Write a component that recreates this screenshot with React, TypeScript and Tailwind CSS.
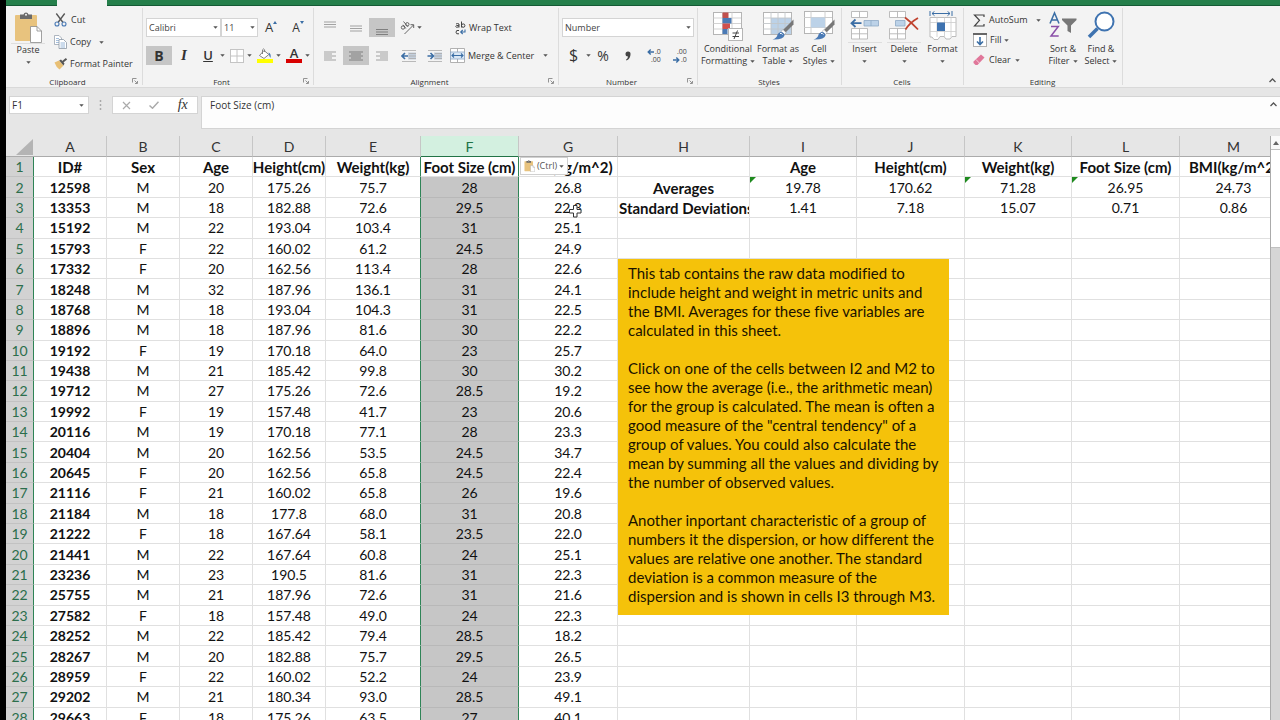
import React from "react";

type IconProps = { className?: string };

const SEGOE = "font-['Open_Sans','Noto_Sans',sans-serif]";

function Caret({ className = "" }: IconProps) {
  return (
    <svg viewBox="0 0 5 3" className={`h-[3px] w-[5px] shrink-0 ${className}`} aria-hidden="true">
      <path d="M0.3 0.2H4.7L2.5 2.8Z" fill="#555" />
    </svg>
  );
}

function Launcher() {
  return (
    <button type="button" aria-label="More options" className="absolute right-[5px] bottom-[3px] h-[6px] w-[6px]">
      <svg viewBox="0 0 6 6" className="h-full w-full">
        <path d="M0.5 4.5V0.5H4.5M2.5 2.5L5 5M5.5 3V5.5H3" fill="none" stroke="#888" strokeWidth="0.9" />
      </svg>
    </button>
  );
}

function Group({
  label,
  className,
  launcher = false,
  children,
}: {
  label: string;
  className: string;
  launcher?: boolean;
  children: React.ReactNode;
}) {
  return (
    <section aria-label={label} className={`relative flex h-full shrink-0 flex-col ${className}`}>
      <div className="min-h-0 flex-1">{children}</div>
      <div className={`h-[11px] text-center text-[8px] leading-[11px] text-[#333] ${launcher ? "pr-[14px]" : "pr-[2px]"}`}>{label}</div>
      {launcher && <Launcher />}
      <span className="absolute top-[2px] right-0 bottom-[2px] w-px bg-[#dcdcdc]" />
    </section>
  );
}

function PasteIcon({ className = "" }: IconProps) {
  return (
    <svg viewBox="0 0 28 31" className={className} aria-hidden="true">
      <rect x="1" y="3" width="22" height="26" rx="1" fill="#e8c37e" />
      <path d="M6 2.5h3.5a2.6 2.6 0 0 1 5 0H18V7H6Z" fill="#6a6a6a" />
      <circle cx="12" cy="2.8" r="1" fill="#f3f3f3" />
      <path d="M16.5 14.5h6.5l4.5 4.5v11.5h-11z" fill="#fff" stroke="#8a8a8a" strokeWidth="0.8" />
      <path d="M23 14.5v4.5h4.5" fill="none" stroke="#8a8a8a" strokeWidth="0.8" />
    </svg>
  );
}

function CutIcon() {
  return (
    <svg viewBox="0 0 13 14" className="h-[14px] w-[13px]" aria-hidden="true">
      <path d="M2.3 0.5L9 9.5M10.7 0.5L4 9.5" stroke="#555" strokeWidth="1.3" fill="none" />
      <circle cx="3" cy="11" r="2" fill="none" stroke="#4a7ab5" strokeWidth="1.1" />
      <circle cx="10" cy="11" r="2" fill="none" stroke="#4a7ab5" strokeWidth="1.1" />
    </svg>
  );
}

function CopyIcon() {
  return (
    <svg viewBox="0 0 13 14" className="h-[14px] w-[13px]" aria-hidden="true">
      <path d="M0.5 0.5H5L7.5 3V9.5H0.5Z" fill="#fff" stroke="#9aa5b1" strokeWidth="0.8" />
      <path d="M2 3.5h3M2 5.5h3M2 7.5h3" stroke="#8fb0d5" strokeWidth="0.8" />
      <path d="M5 4.5H9.5L12.5 7.5V13.5H5Z" fill="#fff" stroke="#8a97a5" strokeWidth="0.8" />
      <path d="M6.5 8h4.5M6.5 10h4.5M6.5 12h4.5" stroke="#7fa4cf" strokeWidth="0.8" />
    </svg>
  );
}

function PainterIcon() {
  return (
    <svg viewBox="0 0 14 12" className="h-[12px] w-[14px]" aria-hidden="true">
      <path d="M0.5 4.5L5 2.5L9.5 7.5L5.5 11.5Q2 9 0.5 4.5Z" fill="#e8bf74" />
      <path d="M5.2 2.5L7 1.5L10.5 5.5L9.5 7.5Z" fill="#555" />
      <path d="M8.5 4L12.5 0.8" stroke="#555" strokeWidth="2" />
    </svg>
  );
}

function BordersIcon() {
  return (
    <svg viewBox="0 0 14 14" className="h-[14px] w-[14px]" aria-hidden="true">
      <rect x="0.5" y="0.5" width="13" height="13" fill="#fff" stroke="#c4c4c4" />
      <path d="M7 1V13M1 7H13" stroke="#c4c4c4" />
    </svg>
  );
}

function FillIcon() {
  return (
    <svg viewBox="0 0 16 15" className="h-[15px] w-[16px]" aria-hidden="true">
      <path d="M7 2.5L11.8 6.5L7 10.5L2.5 7.5Z" fill="#fff" stroke="#777" strokeWidth="0.9" />
      <path d="M5.5 6V1.8Q6.5 0 7.6 1.8V4" fill="none" stroke="#777" strokeWidth="0.9" />
      <path d="M11.5 4.5Q14.5 5.5 13.5 10Q12 8 11.5 4.5Z" fill="#4a7ab5" />
      <rect x="0" y="11" width="16" height="4" fill="#ffff00" />
    </svg>
  );
}

function AlignIcon({ rows, color = "#999" }: { rows: [number, number, number][]; color?: string }) {
  return (
    <svg viewBox="0 0 14 14" className="h-[14px] w-[14px]" aria-hidden="true">
      {rows.map(([x1, x2, y]) => (
        <path key={y} d={`M${x1} ${y}H${x2}`} stroke={color} strokeWidth="0.9" />
      ))}
    </svg>
  );
}

function OrientationIcon() {
  return (
    <svg viewBox="0 0 15 14" className="h-[14px] w-[15px]" aria-hidden="true">
      <g fill="none" stroke="#555" strokeWidth="0.9">
        <circle cx="3" cy="6.5" r="1.7" />
        <path d="M3.2 3.8L5.8 7.5" />
        <path d="M3.5 0.5L8 5.8" />
        <circle cx="7.3" cy="3.3" r="1.7" />
        <path d="M4.5 13L13.5 4M13.7 7V3.7H10.5" />
      </g>
    </svg>
  );
}

function IndentIcon({ flip = false }: { flip?: boolean }) {
  return (
    <svg viewBox="0 0 15 12" className="h-[12px] w-[15px]" aria-hidden="true">
      <rect x="7" y="2.5" width="8" height="7" fill="#c3cfdd" />
      <path d="M1 0.5H15M1 11.5H15M8 3.5H15M8 6H15M8 8.5H15" stroke="#aaa" strokeWidth="0.8" />
      {flip ? (
        <path d="M0.5 6H6M3.5 3L6.5 6L3.5 9" stroke="#3b6ea5" strokeWidth="1.6" fill="none" />
      ) : (
        <path d="M7 6H1.5M4 3L1 6L4 9" stroke="#3b6ea5" strokeWidth="1.6" fill="none" />
      )}
    </svg>
  );
}

function WrapIcon() {
  return (
    <svg viewBox="0 0 11 14" className="h-[14px] w-[11px]" aria-hidden="true">
      <g fill="none" stroke="#444" strokeWidth="1">
        <path d="M1 3Q2.5 2 4 3V6.5M4 4.3Q0.7 4.3 0.7 5.5Q0.9 7 4 5.7" />
        <path d="M6.5 0.5V6.5" />
        <circle cx="8.2" cy="4.6" r="1.7" />
        <path d="M4 9.5Q1 8.7 1 11.2Q1 13.5 4 12.8" />
      </g>
      <path d="M10 8.5V11H6M7.7 9L5.7 11L7.7 13" fill="none" stroke="#3b6ea5" strokeWidth="1.1" />
    </svg>
  );
}

function MergeIcon() {
  return (
    <svg viewBox="0 0 15 15" className="h-[15px] w-[15px]" aria-hidden="true">
      <path d="M0.5 0.5H14.5V14.5H0.5ZM7.5 0.5V4M7.5 11V14.5" fill="#fff" stroke="#a8a8a8" strokeWidth="0.9" />
      <rect x="0.5" y="4" width="14" height="7" fill="#dbe8f5" stroke="#8ea9c5" strokeWidth="0.8" />
      <path d="M2 7.5H13M4 5.5L2 7.5L4 9.5M11 5.5L13 7.5L11 9.5" fill="none" stroke="#3b6ea5" strokeWidth="1.1" />
    </svg>
  );
}

function DecimalIcon({ increase = false }: { increase?: boolean }) {
  return (
    <span className="relative flex w-[14px] flex-col items-end text-[7px] leading-[8px] text-[#444]">
      <span>{increase ? ".0" : ".00"}</span>
      <span>{increase ? ".00" : ".0"}</span>
      <svg
        viewBox="0 0 7 6"
        className={`absolute left-0 h-[6px] w-[7px] ${increase ? "top-[1px]" : "bottom-[1px]"}`}
        aria-hidden="true"
      >
        {increase ? (
          <path d="M7 3H1.5M3.7 0.5L1.2 3L3.7 5.5" fill="none" stroke="#3b6ea5" strokeWidth="1.4" />
        ) : (
          <path d="M0 3H5.5M3.3 0.5L5.8 3L3.3 5.5" fill="none" stroke="#3b6ea5" strokeWidth="1.4" />
        )}
      </svg>
    </span>
  );
}

function ConditionalIcon() {
  return (
    <svg viewBox="0 0 30 30" className="h-[30px] w-[30px]" aria-hidden="true">
      <rect x="0.5" y="1.5" width="28" height="22" fill="#fff" stroke="#b5b5b5" />
      <path d="M9.5 1V23M19 1V23M0 7H28M0 12.5H28M0 18H28" stroke="#c8c8c8" strokeWidth="0.8" />
      <rect x="9.5" y="1.5" width="6" height="5.5" fill="#c0504d" />
      <rect x="9.5" y="7" width="9" height="5.5" fill="#4a7ab5" />
      <rect x="9.5" y="12.5" width="7.5" height="5.5" fill="#d0504d" />
      <rect x="9.5" y="18" width="5" height="5" fill="#4a7ab5" />
      <rect x="15.5" y="17.5" width="14" height="12" fill="#fff" stroke="#b5b5b5" />
      <path d="M19.5 22H26M19.5 25.5H26M24.5 19.5L21 28" stroke="#444" strokeWidth="1" />
    </svg>
  );
}

function Brush() {
  return (
    <g>
      <path d="M30.500 8.5V13.5L22.5 21.5L20 19Z" fill="#777" />
      <path d="M20 18.5L23 21.5L21.5 23.5L18 20.5Z" fill="#fff" stroke="#888" strokeWidth="0.5" />
      <path d="M17.5 21Q21 21 21.5 24.5Q20 29 9.5 28.5Q14 27 14.5 23.5Q15.5 21.5 17.5 21Z" fill="#4a7ab5" />
      <path d="M17 22.5Q18.5 22 19.5 23.5" stroke="#fff" strokeWidth="1" fill="none" />
    </g>
  );
}

function FormatTableIcon() {
  return (
    <svg viewBox="0 0 31 30" className="h-[30px] w-[31px]" aria-hidden="true">
      <rect x="0.5" y="1.5" width="28" height="22" fill="#fff" stroke="#b5b5b5" />
      <rect x="8" y="7" width="20" height="16" fill="#bcd2e8" />
      <path d="M8 1V23M15 1V23M22 1V23M0 7H28M0 12.5H28M0 18H28" stroke="#c2c6ca" strokeWidth="0.9" />
      <Brush />
    </svg>
  );
}

function CellStylesIcon() {
  return (
    <svg viewBox="0 0 31 30" className="h-[30px] w-[31px]" aria-hidden="true">
      <rect x="0.5" y="0.5" width="28" height="22" fill="#fff" stroke="#b5b5b5" />
      <path d="M7 0V22M21 0V22M0 6.5H28M0 16.5H28" stroke="#c8c8c8" strokeWidth="0.9" />
      <rect x="7" y="6.5" width="14" height="10" fill="#bcd2e8" />
      <Brush />
    </svg>
  );
}

function InsertIcon() {
  return (
    <svg viewBox="0 0 30 30" className="h-[30px] w-[30px]" aria-hidden="true">
      <g fill="#fff" stroke="#b5b5b5" strokeWidth="0.9">
        <path d="M1.5 0.5H17.5V6.5H1.5ZM9.5 0.5V6.5" />
        <path d="M1.5 17.5H17.5V28H1.5ZM9.5 17.5V28M1.5 22.8H17.5" />
      </g>
      <path d="M14 9.5H28.5V15H14ZM21 9.5V15" fill="#bcd2e8" stroke="#8ea9c5" strokeWidth="0.8" />
      <path d="M11.5 12.2H2M5.5 8.5L1.5 12.2L5.5 16" fill="none" stroke="#3b6ea5" strokeWidth="1.8" />
    </svg>
  );
}

function DeleteIcon() {
  return (
    <svg viewBox="0 0 30 30" className="h-[30px] w-[30px]" aria-hidden="true">
      <g fill="#fff" stroke="#b5b5b5" strokeWidth="0.9">
        <path d="M0.5 0.5H16.5V6.5H0.5ZM8.5 0.5V6.5" />
        <path d="M0.5 17.5H16.5V28H0.5ZM8.5 17.5V28M0.5 22.8H16.5" />
      </g>
      <path d="M6.5 9.5H16V15H6.5Z" fill="#bcd2e8" stroke="#8ea9c5" strokeWidth="0.8" />
      <path d="M16 6.5Q22 11 29 18.5M29 7Q21 11.5 16.5 18.5" fill="none" stroke="#c0432f" strokeWidth="1.8" />
    </svg>
  );
}

function FormatIcon() {
  return (
    <svg viewBox="0 0 28 30" className="h-[30px] w-[28px]" aria-hidden="true">
      <path d="M1 0V5M23 0V5M3 2.5H21M5.5 0.3L3 2.5L5.5 4.7M18.5 0.3L21 2.5L18.5 4.7" fill="none" stroke="#3b6ea5" strokeWidth="1" />
      <path d="M1 6.5H27V25.5H23L21 28H17L15 25.5H11L9 28.5H5L3 26H1Z" fill="#fff" stroke="#b5b5b5" strokeWidth="0.9" />
      <path d="M8 6.5V26M15.5 6.5V26M22 6.5V26M1 11.5H27M1 20.5H27" stroke="#ccc" strokeWidth="0.8" />
      <rect x="8" y="11.5" width="8" height="8.5" fill="#3f73b0" />
    </svg>
  );
}

function SigmaIcon() {
  return (
    <svg viewBox="0 0 12 13" className="h-[13px] w-[12px]" aria-hidden="true">
      <path d="M11 3V1H1.5L6.5 6.3L1.5 12H11V10" fill="none" stroke="#444" strokeWidth="1.2" />
    </svg>
  );
}

function FillDownIcon() {
  return (
    <svg viewBox="0 0 14 14" className="h-[14px] w-[14px]" aria-hidden="true">
      <rect x="0.5" y="0.5" width="13" height="13" fill="#fff" stroke="#b0b0b0" />
      <rect x="0" y="0" width="14" height="2" fill="#666" />
      <path d="M7 4V11.5M4 8.5L7 11.5L10 8.5" fill="none" stroke="#3b6ea5" strokeWidth="1.6" />
    </svg>
  );
}

function EraserIcon() {
  return (
    <svg viewBox="0 0 12 12" className="h-[12px] w-[12px]" aria-hidden="true">
      <path d="M8 0.5L11.5 3.5L4.5 11H2.5L0.5 9V7.5Z" fill="#e0779a" />
      <path d="M3 5.5L6.3 9" stroke="#f7d5e0" strokeWidth="0.9" />
    </svg>
  );
}

function SortIcon() {
  return (
    <svg viewBox="0 0 28 28" className="h-[28px] w-[28px]" aria-hidden="true">
      <path d="M1 12.5L5.5 2L10 12.5M2.7 9H8.3" fill="none" stroke="#3b6ea5" strokeWidth="1.5" />
      <path d="M2 15.5H9.3L2 25H9.7" fill="none" stroke="#8a4fa8" strokeWidth="1.5" />
      <path d="M13 7.5H27.5V9L22 14.5V22L18.5 20V14.5L13 9Z" fill="#777" />
    </svg>
  );
}

function FindIcon() {
  return (
    <svg viewBox="0 0 28 28" className="h-[28px] w-[28px]" aria-hidden="true">
      <circle cx="17.5" cy="10.5" r="9" fill="#fff" stroke="#3f73b0" strokeWidth="2" />
      <path d="M10.5 17.5L2 26" stroke="#3f73b0" strokeWidth="3.5" />
    </svg>
  );
}

function BigButton({
  icon,
  lines,
  className = "",
  split = false,
}: {
  icon: React.ReactNode;
  lines: string[];
  className?: string;
  split?: boolean;
}) {
  return (
    <button type="button" className={`flex shrink-0 flex-col items-center text-[9px] leading-[12px] ${className}`}>
      <span className={`flex h-[32px] justify-center border-b ${split ? "w-[34px] border-[#dedede]" : "border-transparent"}`}>{icon}</span>
      <span className="whitespace-nowrap">{lines[0]}</span>
      <span className="flex h-[12px] items-center gap-[3px] whitespace-nowrap">
        {lines[1]}
        <Caret />
      </span>
    </button>
  );
}

function ToolButton({
  label,
  className = "w-[26px]",
  pressed = false,
  children,
}: {
  label: string;
  className?: string;
  pressed?: boolean;
  children: React.ReactNode;
}) {
  return (
    <button
      type="button"
      aria-label={label}
      aria-pressed={pressed}
      className={`flex h-[19px] shrink-0 items-center justify-center ${pressed ? "bg-[#c6c6c6]" : ""} ${className}`}
    >
      {children}
    </button>
  );
}

function Combo({ label, value, className }: { label: string; value: string; className: string }) {
  return (
    <label className={`relative flex h-[19px] shrink-0 items-center border border-[#d4d4d4] bg-white ${className}`}>
      <select aria-label={label} className="h-full w-full appearance-none bg-transparent pl-[2px] text-[9px] text-[#444]">
        <option>{value}</option>
      </select>
      <Caret className="absolute right-[2px]" />
    </label>
  );
}

function Ribbon() {
  return (
    <div className="flex h-[82px] shrink-0 border-b border-[#d9d9d9] bg-[#f3f3f3] text-[#333]">
      <Group label="Clipboard" className="w-[137px]" launcher>
        <div className="flex">
          <BigButton
            icon={<PasteIcon className="h-[31px] w-[28px]" />}
            lines={["Paste"]}
            split
            className="w-[44px] pt-[6px]"
          />
          <div className="flex flex-col gap-[8px] pt-[7px] pl-[4px] text-[9px] leading-[14px]">
            <button type="button" className="flex items-center gap-[4px]">
              <CutIcon />
              Cut
            </button>
            <button type="button" className="flex items-center gap-[3px]">
              <CopyIcon />
              Copy
              <Caret className="ml-[5px]" />
            </button>
            <button type="button" className="flex items-center gap-[2px] whitespace-nowrap">
              <PainterIcon />
              Format Painter
            </button>
          </div>
        </div>
      </Group>

      <Group label="Font" className="w-[171px]" launcher>
        <div className="flex items-center pt-[12px] pl-[3px]">
          <Combo label="Font name" value="Calibri" className="w-[75px]" />
          <Combo label="Font size" value="11" className="w-[37px]" />
          <button type="button" aria-label="Increase font size" className="flex h-[19px] w-[26px] items-center justify-center text-[13px]">
            A
            <svg viewBox="0 0 4 3" className="mb-[10px] h-[3px] w-[4px]" aria-hidden="true">
              <path d="M0 3L2 0L4 3Z" fill="#3b6ea5" />
            </svg>
          </button>
          <button type="button" aria-label="Decrease font size" className="flex h-[19px] w-[28px] items-center justify-center text-[12px]">
            A
            <svg viewBox="0 0 4 3" className="mb-[10px] h-[3px] w-[4px]" aria-hidden="true">
              <path d="M0 0L2 3L4 0Z" fill="#3b6ea5" />
            </svg>
          </button>
        </div>
        <div className="flex items-center pt-[9px] pl-[3px]">
          <ToolButton label="Bold" pressed className="w-[26px] text-[14px] font-bold">B</ToolButton>
          <ToolButton label="Italic" className="w-[24px] font-['Liberation_Serif',serif] text-[15px] font-bold italic">I</ToolButton>
          <ToolButton label="Underline" className="w-[24px] text-[13px] font-semibold underline">U</ToolButton>
          <Caret />
          <button type="button" aria-label="Borders" className="ml-[5px] flex items-center gap-[3px]">
            <BordersIcon />
            <Caret />
          </button>
          <button type="button" aria-label="Fill color" className="ml-[5px] flex items-center gap-[3px]">
            <FillIcon />
            <Caret />
          </button>
          <button type="button" aria-label="Font color" className="ml-[5px] flex items-center gap-[3px]">
            <span className="flex h-[15px] w-[16px] items-end justify-center border-b-4 border-[#d80000] text-[13px] leading-[12px] font-semibold">A</span>
            <Caret />
          </button>
        </div>
      </Group>

      <Group label="Alignment" className="w-[245px]" launcher>
        <div className="flex items-center pt-[12px] pl-[3px]">
          <ToolButton label="Top align">
            <AlignIcon rows={[[1, 13, 1], [1, 13, 3.5], [1, 13, 6]]} />
          </ToolButton>
          <ToolButton label="Middle align">
            <AlignIcon rows={[[1, 13, 5], [1, 13, 7.5], [1, 13, 10]]} />
          </ToolButton>
          <ToolButton label="Bottom align" pressed>
            <AlignIcon rows={[[1, 13, 8.5], [1, 13, 11], [1, 13, 13.5]]} color="#777" />
          </ToolButton>
          <button type="button" aria-label="Orientation" className="ml-[5px] flex items-center gap-[2px]">
            <OrientationIcon />
            <Caret />
          </button>
          <button type="button" className="ml-[33px] flex items-center gap-[3px] text-[9px] whitespace-nowrap">
            <WrapIcon />
            Wrap Text
          </button>
        </div>
        <div className="flex items-center pt-[9px] pl-[3px]">
          <ToolButton label="Align left">
            <AlignIcon rows={[[1, 13, 3], [1, 9, 5], [1, 13, 7], [1, 9, 9], [1, 13, 11]]} />
          </ToolButton>
          <ToolButton label="Center" pressed>
            <AlignIcon rows={[[0, 14, 3], [2, 12, 5], [0, 14, 7], [2, 12, 9], [0, 14, 11]]} color="#777" />
          </ToolButton>
          <ToolButton label="Align right">
            <AlignIcon rows={[[1, 13, 3], [5, 13, 5], [1, 13, 7], [5, 13, 9], [1, 13, 11]]} />
          </ToolButton>
          <ToolButton label="Decrease indent">
            <IndentIcon />
          </ToolButton>
          <ToolButton label="Increase indent">
            <IndentIcon flip />
          </ToolButton>
          <button type="button" className="ml-[3px] flex items-center gap-[3px] text-[9px] whitespace-nowrap">
            <MergeIcon />
            Merge &amp; Center
            <Caret className="ml-[6px]" />
          </button>
        </div>
      </Group>

      <Group label="Number" className="w-[139px]" launcher>
        <div className="pt-[12px] pl-[3px]">
          <Combo label="Number format" value="Number" className="w-[132px]" />
        </div>
        <div className="flex items-center pt-[9px] pl-[10px]">
          <button type="button" aria-label="Accounting format" className="flex items-center gap-[8px] text-[16px] leading-[19px]">
            $
            <Caret />
          </button>
          <button type="button" aria-label="Percent style" className="mr-[6px] ml-[6px] text-[14px] leading-[19px]">%</button>
          <ToolButton label="Comma style">
            <svg viewBox="0 0 6 10" className="h-[10px] w-[6px]" aria-hidden="true">
              <path d="M3 0.5a2.5 2.5 0 0 1 2.5 2.7Q5.5 7.5 1.5 9.5L1 8.8Q3 7.5 3 5.5A2.5 2.5 0 0 1 3 0.5Z" fill="#444" />
            </svg>
          </ToolButton>
          <ToolButton label="Increase decimal">
            <DecimalIcon increase />
          </ToolButton>
          <ToolButton label="Decrease decimal">
            <DecimalIcon />
          </ToolButton>
        </div>
      </Group>

      <Group label="Styles" className="w-[144px]">
        <div className="flex pt-[5px] pl-[3px]">
          <BigButton icon={<ConditionalIcon />} lines={["Conditional", "Formatting"]} className="w-[54px]" />
          <BigButton icon={<FormatTableIcon />} lines={["Format as", "Table"]} className="w-[46px]" />
          <BigButton icon={<CellStylesIcon />} lines={["Cell", "Styles"]} className="w-[36px]" />
        </div>
      </Group>

      <Group label="Cells" className="w-[122px]">
        <div className="flex pt-[5px] pl-[3px]">
          <BigButton icon={<InsertIcon />} lines={["Insert"]} split className="w-[39px]" />
          <BigButton icon={<DeleteIcon />} lines={["Delete"]} split className="w-[40px]" />
          <BigButton icon={<FormatIcon />} lines={["Format"]} className="w-[37px]" />
        </div>
      </Group>

      <Group label="Editing" className="w-[159px]">
        <div className="flex">
          <div className="flex w-[79px] shrink-0 flex-col items-start gap-[6px] pt-[7px] pl-[9px] text-[9px] leading-[14px]">
            <button type="button" className="flex h-[14px] items-center gap-[4px]">
              <SigmaIcon />
              AutoSum
              <Caret className="ml-[4px]" />
            </button>
            <button type="button" className="flex h-[14px] items-center gap-[3px]">
              <FillDownIcon />
              Fill
              <Caret />
            </button>
            <button type="button" className="flex h-[14px] items-center gap-[4px]">
              <EraserIcon />
              Clear
              <Caret />
            </button>
          </div>
          <BigButton icon={<SortIcon />} lines={["Sort &", "Filter"]} className="w-[40px] pt-[5px]" />
          <BigButton icon={<FindIcon />} lines={["Find &", "Select"]} className="w-[36px] pt-[5px]" />
        </div>
      </Group>

      <div className="flex flex-1 items-end justify-end pr-[4px] pb-[4px]">
        <button type="button" aria-label="Collapse the ribbon">
          <svg viewBox="0 0 7 5" className="h-[5px] w-[7px]">
            <path d="M0.5 4L3.5 1L6.5 4" fill="none" stroke="#555" strokeWidth="1.3" />
          </svg>
        </button>
      </div>
    </div>
  );
}

function FormulaBar() {
  return (
    <div className="flex h-[48px] shrink-0 items-start bg-[#e6e6e6] pt-[8px] pl-[3px] text-[#333]">
      <label className="relative flex h-[18px] w-[80px] items-center border border-[#d4d4d4] bg-white">
        <input aria-label="Name box" defaultValue="F1" className="w-full bg-transparent pl-[2px] text-[10px] outline-none" />
        <Caret className="absolute right-[4px]" />
      </label>
      <svg viewBox="0 0 3 10" className="mx-[10px] mt-[4px] h-[10px] w-[3px]" aria-hidden="true">
        <path d="M1.5 0V2M1.5 4V6M1.5 8V10" stroke="#aaa" strokeWidth="1.5" />
      </svg>
      <div className="mr-[3px] flex h-[18px] w-[86px] items-center justify-around border border-[#d4d4d4] bg-white">
        <button type="button" aria-label="Cancel">
          <svg viewBox="0 0 9 9" className="h-[9px] w-[9px]">
            <path d="M1 1L8 8M8 1L1 8" stroke="#aaa" strokeWidth="1.2" />
          </svg>
        </button>
        <button type="button" aria-label="Enter">
          <svg viewBox="0 0 10 8" className="h-[8px] w-[10px]">
            <path d="M0.5 4.5L3.5 7.2L9.5 0.8" fill="none" stroke="#aaa" strokeWidth="1.5" />
          </svg>
        </button>
        <button type="button" aria-label="Insert function" className="font-['Liberation_Serif',serif] text-[14px] leading-[14px] italic">
          fx
        </button>
      </div>
      <div className="flex h-[33px] flex-1 items-start border border-r-0 border-[#d4d4d4] bg-[#fdfdfd] pr-[3px]">
        <input aria-label="Formula" defaultValue="Foot Size (cm)" className="h-[16px] flex-1 bg-transparent pl-[8px] text-[10px] outline-none" />
        <button type="button" aria-label="Collapse formula bar" className="mt-[5px]">
          <svg viewBox="0 0 7 5" className="h-[5px] w-[7px]">
            <path d="M0.5 4L3.5 1L6.5 4" fill="none" stroke="#555" strokeWidth="1.3" />
          </svg>
        </button>
      </div>
    </div>
  );
}

const LETTERS = ["A", "B", "C", "D", "E", "F", "G", "H", "I", "J", "K", "L", "M"];

const HEADINGS = ["ID#", "Sex", "Age", "Height(cm)", "Weight(kg)", "Foot Size (cm)", "BMI(kg/m^2)", "", "Age", "Height(cm)", "Weight(kg)", "Foot Size (cm)", "BMI(kg/m^2)"];

const SUMMARY: string[][] = [
  ["Averages", "19.78", "170.62", "71.28", "26.95", "24.73"],
  ["Standard Deviations", "1.41", "7.18", "15.07", "0.71", "0.86"],
];

const DATA: string[][] = [
  ["12598", "M", "20", "175.26", "75.7", "28", "26.8"],
  ["13353", "M", "18", "182.88", "72.6", "29.5", "22.3"],
  ["15192", "M", "22", "193.04", "103.4", "31", "25.1"],
  ["15793", "F", "22", "160.02", "61.2", "24.5", "24.9"],
  ["17332", "F", "20", "162.56", "113.4", "28", "22.6"],
  ["18248", "M", "32", "187.96", "136.1", "31", "24.1"],
  ["18768", "M", "18", "193.04", "104.3", "31", "22.5"],
  ["18896", "M", "18", "187.96", "81.6", "30", "22.2"],
  ["19192", "F", "19", "170.18", "64.0", "23", "25.7"],
  ["19438", "M", "21", "185.42", "99.8", "30", "30.2"],
  ["19712", "M", "27", "175.26", "72.6", "28.5", "19.2"],
  ["19992", "F", "19", "157.48", "41.7", "23", "20.6"],
  ["20116", "M", "19", "170.18", "77.1", "28", "23.3"],
  ["20404", "M", "20", "162.56", "53.5", "24.5", "34.7"],
  ["20645", "F", "20", "162.56", "65.8", "24.5", "22.4"],
  ["21116", "F", "21", "160.02", "65.8", "26", "19.6"],
  ["21184", "M", "18", "177.8", "68.0", "31", "20.8"],
  ["21222", "F", "18", "167.64", "58.1", "23.5", "22.0"],
  ["21441", "M", "22", "167.64", "60.8", "24", "25.1"],
  ["23236", "M", "23", "190.5", "81.6", "31", "22.3"],
  ["25755", "M", "21", "187.96", "72.6", "31", "21.6"],
  ["27582", "F", "18", "157.48", "49.0", "24", "22.3"],
  ["28252", "M", "22", "185.42", "79.4", "28.5", "18.2"],
  ["28267", "M", "20", "182.88", "75.7", "29.5", "26.5"],
  ["28959", "F", "22", "160.02", "52.2", "24", "23.9"],
  ["29202", "M", "21", "180.34", "93.0", "28.5", "49.1"],
  ["29663", "F", "18", "175.26", "63.5", "27", "40.1"],
];

const ROWS: string[][] = [HEADINGS, ...DATA.map((row, i) => [...row, ...(SUMMARY[i] ?? ["", "", "", "", "", ""])])];

const FLAGGED = ["I2", "K2", "L2"];

function cellClass(row: number, letter: string): string {
  const text = row === 1 ? "text-[15px] font-bold" : letter === "A" || letter === "H" ? "font-bold" : "";
  if (letter === "F") {
    return `${text} border-r border-b border-r-[#2f8457] ${row === 1 ? "border-b-[#e0e0e0] bg-white" : "border-b-[#b8b8b8] bg-[#c6c6c6]"}`;
  }
  if (letter === "E") return `${text} border-r border-b border-r-[#2f8457] border-b-[#e0e0e0]`;
  if (letter === "H") return `${text} text-[15px] border-r border-b border-[#e0e0e0]`;
  return `${text} border-r border-b border-[#e0e0e0]`;
}

function Sheet() {
  return (
    <table className="h-[592px] w-[1282px] table-fixed border-separate border-spacing-0 bg-white text-center font-['Lato',sans-serif] text-[14px] leading-[18px] text-[#111] [font-variant-ligatures:none]">
      <colgroup>
        <col className="w-[28px]" />
        <col className="w-[73px]" />
        <col className="w-[73px]" />
        <col className="w-[73px]" />
        <col className="w-[73px]" />
        <col className="w-[95px]" />
        <col className="w-[98px]" />
        <col className="w-[99px]" />
        <col className="w-[132px]" />
        <col className="w-[107px]" />
        <col className="w-[108px]" />
        <col className="w-[107px]" />
        <col className="w-[108px]" />
        <col className="w-[108px]" />
      </colgroup>
      <thead>
        <tr className="h-[21px] bg-[#e6e6e6] text-[#333]">
          <th aria-label="Select all" className="border-b border-[#ababab] p-0">
            <svg viewBox="0 0 27 19" className="ml-auto h-[19px] w-[27px]" aria-hidden="true">
              <path d="M26 2V18H9Z" fill="#b4b4b4" />
            </svg>
          </th>
          {LETTERS.map((letter) => (
            <th
              key={letter}
              scope="col"
              className={`border-r border-b p-0 pt-[1px] font-normal ${letter === "F" ? "border-r-[#c6c6c6] border-b-[#217346] bg-[#d3f0e0] text-[#217346]" : "border-r-[#c6c6c6] border-b-[#ababab]"}`}
            >
              {letter}
            </th>
          ))}
        </tr>
      </thead>
      <tbody>
        {ROWS.map((cells, i) => (
          <tr key={i}>
            <th scope="row" className="border-r border-b border-r-[#2f8457] border-b-[#c2c2c2] bg-[#d2d2d2] p-0 pt-[1px] font-normal text-[#2c6e4c]">
              {i + 1}
            </th>
            {cells.map((value, c) => (
              <td key={LETTERS[c]} className={`relative p-0 pt-[1px] ${cellClass(i + 1, LETTERS[c])}`}>
                <div className={`flex h-[18px] overflow-hidden whitespace-nowrap ${value.length > 18 ? "justify-start pl-[1px]" : "justify-center"}`}>{value}</div>
                {FLAGGED.includes(`${LETTERS[c]}${i + 1}`) && (
                  <svg viewBox="0 0 6 6" className="absolute top-0 left-0 h-[6px] w-[6px]" aria-hidden="true">
                    <path d="M0 0H6L0 6Z" fill="#1e8a1e" />
                  </svg>
                )}
              </td>
            ))}
          </tr>
        ))}
      </tbody>
    </table>
  );
}

const NOTE: string[][] = [
  [
    "This tab contains the raw data modified to",
    "include height and weight in metric units and",
    "the BMI. Averages for these five variables are",
    "calculated in this sheet.",
  ],
  [
    "Click on one of the cells between I2 and M2 to",
    "see how the average (i.e., the arithmetic mean)",
    "for the group is calculated. The mean is often a",
    'good measure of the "central tendency" of a',
    "group of values. You could also calculate the",
    "mean by summing all the values and dividing by",
    "the number of observed values.",
  ],
  [
    "Another inportant characteristic of a group of",
    "numbers it the dispersion, or how different the",
    "values are relative one another. The standard",
    "deviation is a common measure of the",
    "dispersion and is shown in cells I3 through M3.",
  ],
];

function Note() {
  return (
    <aside className="absolute top-[123px] left-[612px] w-[331px] bg-[#f5c20a] px-[10px] pt-[5px] pb-[9px] font-['Lato',sans-serif] text-[15px] leading-[19px] text-[#1a1200] [font-variant-ligatures:none]">
      {NOTE.map((lines) => (
        <p key={lines[0]} className="mb-[19px] whitespace-nowrap last:mb-0">
          {lines.map((line) => (
            <span key={line} className="block">{line}</span>
          ))}
        </p>
      ))}
    </aside>
  );
}

export default function App() {
  return (
    <div className={`flex h-screen overflow-hidden bg-black pl-[6px] ${SEGOE}`}>
      <div className="flex min-w-0 flex-1 flex-col bg-[#e6e6e6]">
        <div className="flex h-[6px] shrink-0">
          <div className="w-[51px] border-b border-[#155a35] bg-[#257f4b]" />
          <div className="w-[50px] bg-[#f3f3f3]" />
          <div className="flex-1 border-b border-[#155a35] bg-[#257f4b]" />
        </div>
        <Ribbon />
        <FormulaBar />
        <main className="flex min-h-0 flex-1">
          <div className="relative min-w-0 flex-1 overflow-hidden border-r border-[#ababab]">
            <Sheet />
            <Note />
            <button type="button" className="absolute top-[21px] left-[514px] flex h-[18px] w-[48px] items-center justify-between border border-[#d0d0d0] bg-white px-[3px] text-[9px] text-[#555]">
              <PasteIcon className="h-[12px] w-[11px]" />
              (Ctrl)
              <Caret />
            </button>
            <svg viewBox="0 0 13 13" className="absolute top-[69px] left-[563px] h-[13px] w-[13px]" aria-hidden="true">
              <path d="M4.5 0.5H8V4.5H12V8H8V12H4.5V8H0.5V4.5H4.5Z" fill="#fff" stroke="#333" />
            </svg>
          </div>
          <div className="flex w-[9px] shrink-0 flex-col bg-[#d6d6d6]">
            <button type="button" aria-label="Scroll up" className="flex h-[14px] items-center justify-center border-b border-[#c0c0c0] bg-[#fafafa]">
              <svg viewBox="0 0 6 4" className="h-[4px] w-[6px]">
                <path d="M0 4L3 0L6 4Z" fill="#666" />
              </svg>
            </button>
            <div className="h-[98px] border-b border-[#c0c0c0] bg-white" />
          </div>
        </main>
      </div>
    </div>
  );
}
